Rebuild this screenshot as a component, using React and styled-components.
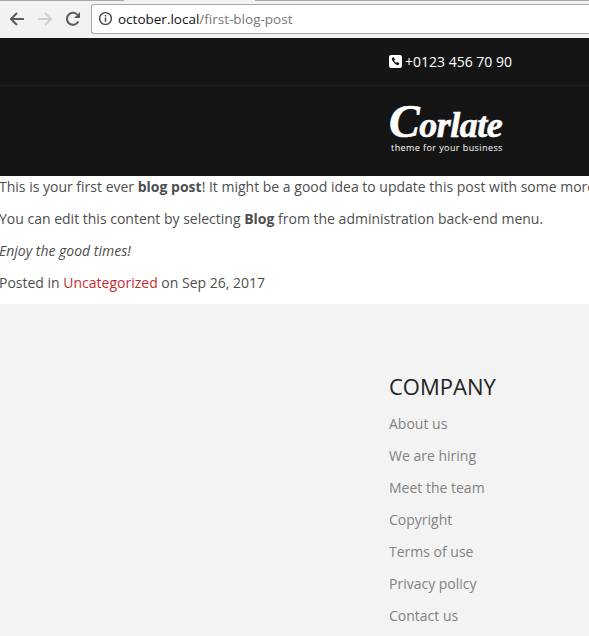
import React from 'react';
import styled, { createGlobalStyle } from 'styled-components';

const links = [
  'About us',
  'We are hiring',
  'Meet the team',
  'Copyright',
  'Terms of use',
  'Privacy policy',
  'Contact us',
];

const App = () => (
  <Page>
    <GlobalStyle />
    <Chrome>
      <TabEdges>
        <TabEdge $width="124px" />
        <TabEdge $width="334px" />
      </TabEdges>
      <NavRow>
        <NavIcon viewBox="0 0 16 16" width="16" height="16">
          <path d="M15 8H2M8 2L2 8l6 6" fill="none" stroke="#5a5a5a" strokeWidth="2" />
        </NavIcon>
        <NavIcon viewBox="0 0 16 16" width="16" height="16">
          <path d="M1 8h13M8 2l6 6-6 6" fill="none" stroke="#cfcfcf" strokeWidth="2" />
        </NavIcon>
        <NavIcon viewBox="0 0 16 16" width="16" height="16">
          <path d="M13.3 10.5A6 6 0 1 1 12.2 3.6" fill="none" stroke="#5a5a5a" strokeWidth="2" />
          <path d="M15 1v6H9z" fill="#5a5a5a" />
        </NavIcon>
        <AddressBar>
          <svg viewBox="0 0 16 16" width="15" height="15">
            <circle cx="8" cy="8" r="6.3" fill="none" stroke="#444" strokeWidth="1.5" />
            <path d="M8 7v4.5M8 4.2v1.6" stroke="#444" strokeWidth="1.6" />
          </svg>
          <Url>
            october.local<UrlPath>/first-blog-post</UrlPath>
          </Url>
        </AddressBar>
      </NavRow>
    </Chrome>
    <TopBar>
      <Column>
        <Phone>
          <svg viewBox="0 0 13 13" width="13" height="13">
            <rect width="13" height="13" rx="2" fill="#fff" />
            <path
              d="M3.2 2.8l1.6-.5 1.2 2.2-.9.9c.4 1 1.2 1.9 2.2 2.4l1-.9 2 1.3-.5 1.6c-.3.4-1 .5-1.6.3C5.800 9 3.900 7.100 2.900 4.500c-.2-.6-.1-1.300.3-1.700z"
              fill="#151515"
            />
          </svg>
          +0123 456 70 90
        </Phone>
      </Column>
    </TopBar>
    <Header>
      <Column>
        <Logo>
          <LogoName>Corlate</LogoName>
          <LogoTag>theme for your business</LogoTag>
        </Logo>
      </Column>
    </Header>
    <Post>
      <Para>
        This is your first ever <b>blog post</b>! It might be a good idea to update this post with some more relevant content.
      </Para>
      <Para>
        You can edit this content by selecting <b>Blog</b> from the administration back-end menu.
      </Para>
      <Para>
        <i>Enjoy the good times!</i>
      </Para>
      <Para>
        Posted in <Category>Uncategorized</Category> on Sep 26, 2017
      </Para>
    </Post>
    <Footer>
      <Column>
        <FooterTitle>COMPANY</FooterTitle>
        <FooterList>
          {links.map((link) => (
            <li key={link}>{link}</li>
          ))}
        </FooterList>
      </Column>
    </Footer>
  </Page>
);

export default App;

const GlobalStyle = createGlobalStyle`
  html, body {
    margin: 0;
    padding: 0;
    overflow: hidden;
  }
  body {
    font-family: "Open Sans", "Liberation Sans", sans-serif;
    font-size: 14px;
    color: #4e4e4e;
  }
`;
const Page = styled.div`
  width: 589px;
  height: 636px;
  overflow: hidden;
  background: #fff;
`;
const Chrome = styled.div`
  height: 38px;
  background: #f2f2f2;
`;
const TabEdges = styled.div`
  display: flex;
  justify-content: space-between;
  height: 1px;
`;
const TabEdge = styled.div`
  width: ${(p) => p.$width};
  background: #a8a8a8;
`;
const NavRow = styled.div`
  display: flex;
  align-items: center;
  height: 32px;
  padding: 3px 0 0 9px;
  box-sizing: border-box;
`;
const NavIcon = styled.svg`
  margin-right: 12px;
  flex: none;
`;
const AddressBar = styled.div`
  display: flex;
  align-items: center;
  gap: 5px;
  flex: 1;
  height: 28px;
  margin-left: -2px;
  padding-left: 6px;
  background: #fff;
  border: 1px solid #a9a9a9;
  border-right: 0;
  border-radius: 3px 0 0 3px;
`;
const Url = styled.span`
  font-size: 13.5px;
  color: #111;
`;
const UrlPath = styled.span`
  color: #777;
`;
const Column = styled.div`
  margin-left: 389px;
`;
const TopBar = styled.div`
  height: 48px;
  box-sizing: border-box;
  padding-top: 13px;
  background: #151515;
  border-bottom: 1px solid #1f1f1f;
`;
const Phone = styled.div`
  display: flex;
  align-items: center;
  gap: 3px;
  height: 20px;
  font-size: 14px;
  color: #fff;
`;
const Header = styled.div`
  height: 90px;
  box-sizing: border-box;
  padding-top: 17px;
  background: #151515;
`;
const Logo = styled.div`
  width: 114px;
  color: #fff;
`;
const LogoName = styled.div`
  height: 37px;
  font-family: "Liberation Serif", serif;
  font-size: 36px;
  font-style: italic;
  font-weight: bold;
  line-height: 37px;
  letter-spacing: -0.5px;
  -webkit-text-stroke: 0.6px #fff;
  &::first-letter {
    font-size: 46px;
  }
`;
const LogoTag = styled.div`
  margin: 2px 0 0 2px;
  font-size: 9px;
  line-height: 12px;
  letter-spacing: 0.42px;
  white-space: nowrap;
`;
const Post = styled.div`
  height: 128px;
  margin-left: -1px;
  white-space: nowrap;
  overflow: hidden;
`;
const Para = styled.p`
  margin: 0 0 10px;
  line-height: 22px;
  height: 22px;
`;
const Category = styled.span`
  color: #c52d2f;
`;
const Footer = styled.div`
  height: 332px;
  box-sizing: border-box;
  padding-top: 67px;
  background: #f3f3f3;
`;
const FooterTitle = styled.h3`
  margin: 0 0 7px;
  font-size: 22px;
  font-weight: 400;
  line-height: 30px;
  color: #222;
`;
const FooterList = styled.ul`
  margin: 0;
  padding: 0;
  list-style: none;
  color: #828282;
  li {
    height: 32px;
    line-height: 32px;
  }
`;
